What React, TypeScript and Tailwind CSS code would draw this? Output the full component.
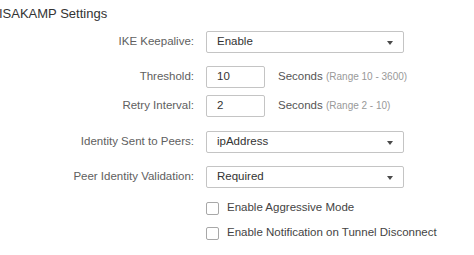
import React from 'react';

const labelCls = "w-[194px] shrink-0 text-right text-[11.5px] text-[#606060]";

function Caret() {
  return (
    <svg width="6" height="4" viewBox="0 0 6 4" className="absolute right-[10px] top-[9px]">
      <path d="M0 0 H6 L3 4 Z" fill="#4a4a4a" />
    </svg>
  );
}

function Select({ value }: { value: string }) {
  return (
    <div className="relative w-[198px] h-[22px] border border-[#c4c4c4] rounded-[2px] bg-white flex items-center pl-[10px] text-[11.5px] text-[#333]">
      {value}
      <Caret />
    </div>
  );
}

function NumberBox({ value }: { value: string }) {
  return (
    <div className="w-[59px] h-[22px] border border-[#c4c4c4] rounded-[2px] bg-white flex items-center pl-[10px] text-[11.5px] text-[#333]">
      {value}
    </div>
  );
}

function Row({
  label,
  className,
  children,
}: {
  label?: string;
  className?: string;
  children: React.ReactNode;
}) {
  return (
    <div className={`flex items-center h-[22px] ${className ?? ''}`}>
      <div className={labelCls}>{label}</div>
      <div className="ml-[12px] flex items-center">{children}</div>
    </div>
  );
}

function Check({ text }: { text: string }) {
  return (
    <label className="flex items-center gap-[8px] text-[11.5px] text-[#444]">
      <span className="w-[13px] h-[13px] border border-[#a8a8a8] rounded-[2px] bg-white" />
      {text}
    </label>
  );
}

export default function App() {
  return (
    <div
      className="w-[474px] h-[255px] bg-white overflow-hidden"
      style={{ fontFamily: '"Liberation Sans", Arial, sans-serif' }}
    >
      {/* Header */}
      <div className="pt-[6px] ml-[-1px] text-[13px] leading-[16px] text-[#333]">
        ISAKAMP Settings
      </div>

      <Row label="IKE Keepalive:" className="mt-[9px]">
        <Select value="Enable" />
      </Row>

      <Row label="Threshold:" className="mt-[13px]">
        <NumberBox value="10" />
        <span className="ml-[13px] text-[11.5px] text-[#555]">
          Seconds <span className="text-[10px] text-[#999]">(Range 10 - 3600)</span>
        </span>
      </Row>

      <Row label="Retry Interval:" className="mt-[7px]">
        <NumberBox value="2" />
        <span className="ml-[13px] text-[11.5px] text-[#555]">
          Seconds <span className="text-[10px] text-[#999]">(Range 2 - 10)</span>
        </span>
      </Row>

      <Row label="Identity Sent to Peers:" className="mt-[14px]">
        <Select value="ipAddress" />
      </Row>

      <Row label="Peer Identity Validation:" className="mt-[13px]">
        <Select value="Required" />
      </Row>

      <Row className="mt-[9px]">
        <Check text="Enable Aggressive Mode" />
      </Row>

      <Row className="mt-[3px]">
        <Check text="Enable Notification on Tunnel Disconnect" />
      </Row>
    </div>
  );
}
